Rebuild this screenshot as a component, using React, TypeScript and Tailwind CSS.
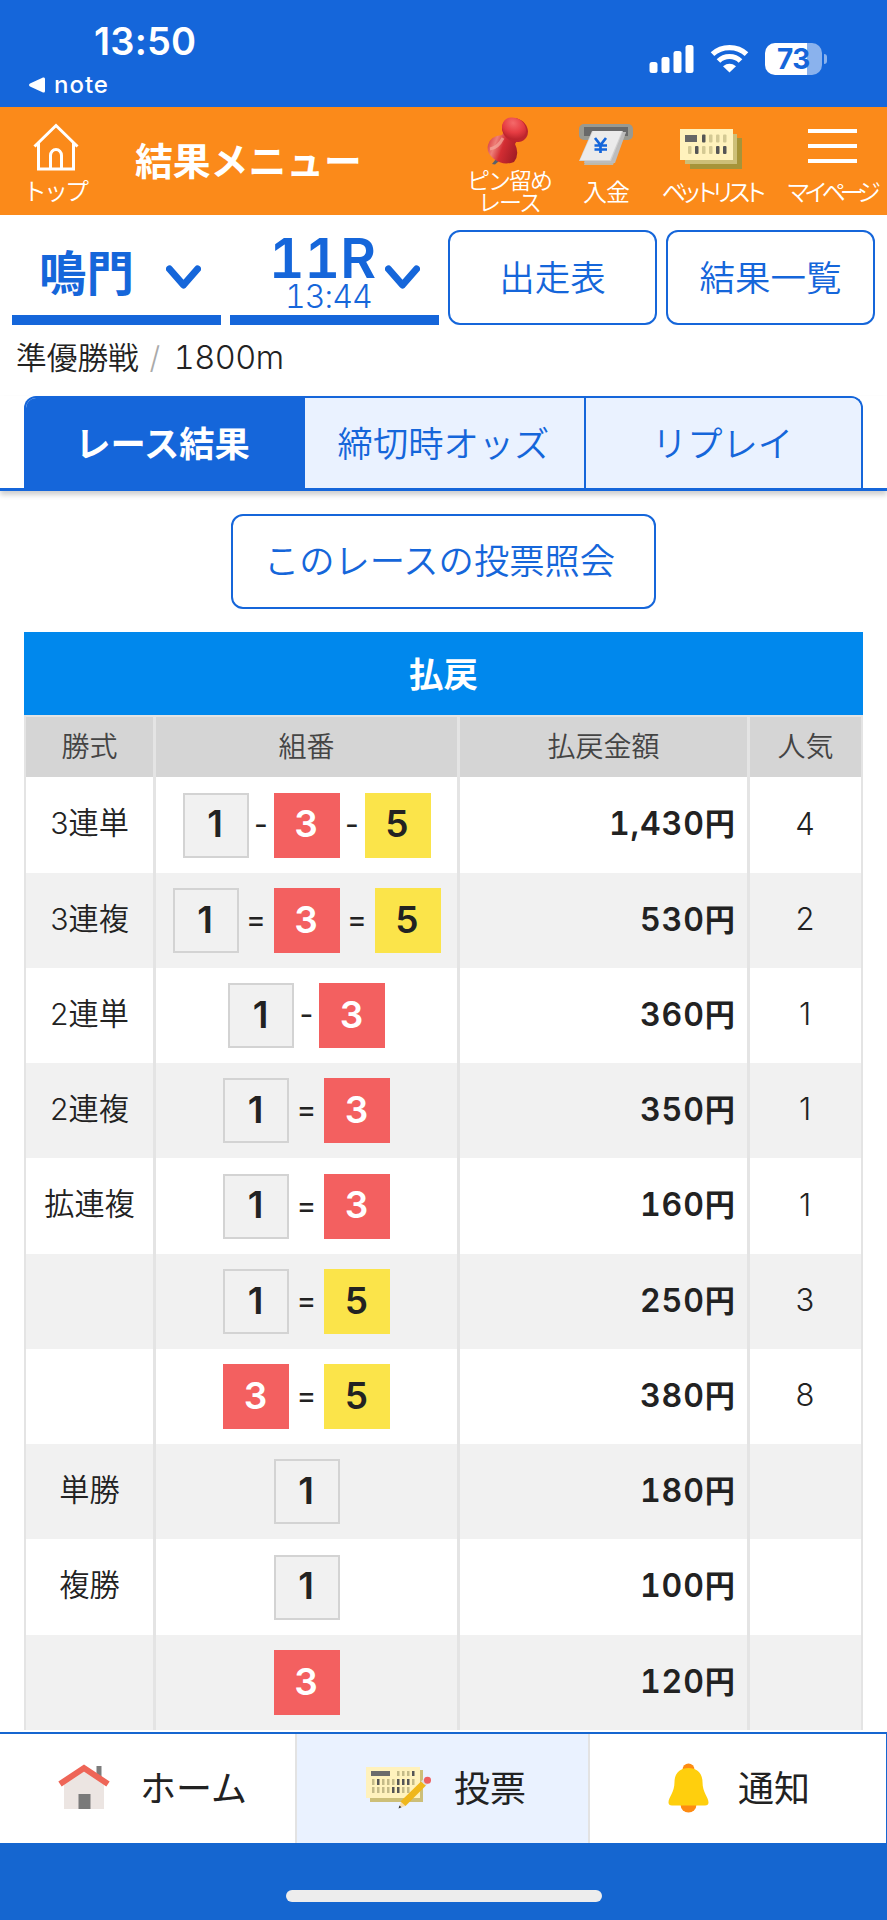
import React from "react";

const BLUE = "text-[#1566da]";

interface TileProps {
  n: number;
}

const tileColors: Record<number, string> = {
  1: "bg-[#f1f1f1] border-2 border-[#d3d3d3] text-[#222]",
  3: "bg-[#f36060] text-white",
  5: "bg-[#fbe44a] text-[#222]",
};

const Tile: React.FC<TileProps> = ({ n }) => (
  <span
    className={`flex h-[65px] w-[66px] items-center justify-center pr-px pb-[3px] text-[37px] leading-none font-semibold ${tileColors[n]}`}
  >
    {n}
  </span>
);

interface Row {
  type: string;
  nums: number[];
  sep: "-" | "=";
  amount: string;
  rank: string;
}

const rows: Row[] = [
  { type: "3連単", nums: [1, 3, 5], sep: "-", amount: "1,430", rank: "4" },
  { type: "3連複", nums: [1, 3, 5], sep: "=", amount: "530", rank: "2" },
  { type: "2連単", nums: [1, 3], sep: "-", amount: "360", rank: "1" },
  { type: "2連複", nums: [1, 3], sep: "=", amount: "350", rank: "1" },
  { type: "拡連複", nums: [1, 3], sep: "=", amount: "160", rank: "1" },
  { type: "", nums: [1, 5], sep: "=", amount: "250", rank: "3" },
  { type: "", nums: [3, 5], sep: "=", amount: "380", rank: "8" },
  { type: "単勝", nums: [1], sep: "-", amount: "180", rank: "" },
  { type: "複勝", nums: [1], sep: "-", amount: "100", rank: "" },
  { type: "", nums: [3], sep: "-", amount: "120", rank: "" },
];

const StatusBar = () => (
  <div className="flex h-[107px] justify-between bg-[#1566da] text-white">
    <div className="pl-[28px]">
      <div className="mt-[18px] pl-[66px] text-[38px] leading-[46px] font-semibold tracking-[0.2px]">
        13:50
      </div>
      <div className="mt-[8px] flex items-center">
        <svg width="18" height="16" viewBox="0 0 18 16" fill="currentColor">
          <path d="M2 6.6 15 .6q2-.8 2 1.4v12q0 2.200-2 1.400L2 9.400Q0 8 2 6.600Z" />
        </svg>
        <span className="ml-[8px] text-[24px] leading-[26px] font-medium tracking-[1px]">note</span>
      </div>
    </div>
    <div className="mt-[42px] mr-[60px] flex h-[33px] items-center">
      <svg width="45" height="29" viewBox="0 0 45 29" fill="currentColor">
        <rect x="0.500" y="18" width="8" height="11" rx="2.500" />
        <rect x="12.500" y="13" width="8" height="16" rx="2.500" />
        <rect x="24.500" y="7" width="8" height="22" rx="2.500" />
        <rect x="36.500" y="1" width="8" height="28" rx="2.500" />
      </svg>
      <svg
        className="ml-[16px]"
        width="39"
        height="29"
        viewBox="0 0 39 29"
        fill="none"
        stroke="currentColor"
        strokeWidth="5.200"
      >
        <path d="M2.500 10.200Q9.500 3.600 19.500 3.600T36.500 10.200" />
        <path d="M8.500 17Q13 12.500 19.500 12.500T30.500 17" />
        <path d="M13 22.200Q19.500 17.500 26 22.200L19.500 28.600Z" fill="currentColor" stroke="none" />
      </svg>
      <div className="ml-[16px] flex h-[32px] w-[57px] items-center justify-center rounded-[10px] bg-[linear-gradient(90deg,#fff_74%,#8ab2ed_74%)] pt-[1px] text-[28px] leading-none font-bold tracking-[-0.5px] text-[#1566da]">
        73
      </div>
      <div className="ml-[2px] h-[10px] w-[3px] rounded-r-full bg-[#8ab2ed]" />
    </div>
  </div>
);

const TopIcon = () => (
  <svg width="46" height="48" viewBox="0 0 46 48" fill="none" stroke="#fff" strokeWidth="3">
    <path d="M1.500 23.500 23 2.500 44.500 23.500" />
    <path d="M5.500 20V46H40.500V20" />
    <path d="M17.500 46V32.500a5.500 6 0 0 1 11 0V46" />
  </svg>
);

const PinIcon = () => (
  <svg width="42" height="48" viewBox="0 0 42 48">
    <defs>
      <radialGradient id="pin-head" cx="0.350" cy="0.300" r="0.800">
        <stop offset="0" stopColor="#f46a6a" />
        <stop offset="0.550" stopColor="#e63c42" />
        <stop offset="1" stopColor="#b31f27" />
      </radialGradient>
      <linearGradient id="pin-base" x1="0" y1="0.300" x2="1" y2="0.700">
        <stop offset="0" stopColor="#d83b40" />
        <stop offset="0.250" stopColor="#ee8078" />
        <stop offset="0.500" stopColor="#d32d33" />
        <stop offset="1" stopColor="#a01c24" />
      </linearGradient>
    </defs>
    <path d="M9 42 5 47 8 47.500 12 44Z" fill="#59616b" />
    <path d="M1 28Q3 19 15 18L18 13 31 22 28 27Q33 37 27 45 16 49 7 42-1 36 1 28Z" fill="url(#pin-base)" />
    <ellipse cx="28" cy="13" rx="13.500" ry="11.500" transform="rotate(32 28 13)" fill="#be252d" />
    <ellipse cx="27" cy="11.500" rx="12.500" ry="10.500" transform="rotate(32 27 11.500)" fill="url(#pin-head)" />
    <path d="M3 32Q11 31 16 21" stroke="#f4a79b" strokeWidth="3" fill="none" opacity=".75" />
  </svg>
);

const DepositIcon = () => (
  <svg width="54" height="42" viewBox="0 0 54 42">
    <rect x="0" y="0" width="54" height="16" rx="5" fill="#999991" />
    <rect x="5" y="3" width="44" height="9" fill="#696969" />
    <path d="M15 8H47L34 41H5Z" fill="#bfb9a9" />
    <path d="M13 8H47L36 39H5Z" fill="#bcbcbc" />
    <path d="M13 7H44L32 37H0Z" fill="#d2d2d2" />
    <path d="M14 7H43L31 36H1Z" fill="#ebebeb" />
    <path d="M16 14 21.500 21 27 14M21.500 21V29M15.500 21.500H28M15.500 25.500H28" fill="none" stroke="#1566da" strokeWidth="2.700" />
  </svg>
);

const BetListIcon = () => (
  <svg width="62" height="40" viewBox="0 0 62 40">
    <path d="M10 9H62V40H10Z" fill="#a69439" />
    <path d="M5 5H57V35H5Z" fill="#cdbf78" />
    <path d="M0 0H53V31H0Z" fill="#fff2bd" />
    <rect x="5" y="6" width="12" height="7" fill="#666" />
    {[22, 29, 36, 43].map((x, i) => (
      <rect key={x} x={x} y="5.500" width="3.500" height="8" rx="1" fill={i === 0 ? "#555" : "#d4c994"} />
    ))}
    {[8, 15, 22, 29, 36, 43].map((x, i) => (
      <rect key={x} x={x} y="17" width="3.500" height="8" rx="1" fill={i === 1 || i > 3 ? "#555" : "#d4c994"} />
    ))}
  </svg>
);

const Header = () => (
  <header className="flex h-[108px] bg-[#fb8a1a] font-[350] text-white">
    <div className="flex w-[112px] flex-col items-center pt-[16px] text-[24px] leading-[28px]">
      <TopIcon />
      <span className="mt-[7px] mr-[3px] tracking-[-2.800px]">トップ</span>
    </div>
    <h1 className="ml-[23px] w-[327px] pt-[28px] text-[37.800px] leading-[52px] font-bold">結果メニュー</h1>
    <div className="flex w-[92px] flex-col items-center pt-[10px] text-[23px] leading-[22px] whitespace-nowrap">
      <PinIcon />
      <span className="mt-[5px] ml-[2px] text-center tracking-[-2px]">
        ピン留め
        <br />
        レース
      </span>
    </div>
    <div className="flex w-[101px] flex-col items-center pt-[17px] pl-[2px] text-[24px] leading-[28px]">
      <DepositIcon />
      <span className="mt-[13px] ml-px tracking-[-1px]">入金</span>
    </div>
    <div className="flex w-[119px] flex-col items-center pt-[22px] text-[24px] leading-[28px]">
      <div className="mr-[7px]">
        <BetListIcon />
      </div>
      <span className="mt-[10px] mr-[7px] tracking-[-7.600px] whitespace-nowrap">ベットリスト</span>
    </div>
    <div className="flex w-[113px] flex-col items-center pt-[22px] text-[24px] leading-[28px]">
      <div className="ml-[3px] flex flex-col gap-[11px]">
        <i className="h-[4px] w-[49px] bg-white" />
        <i className="h-[4px] w-[49px] bg-white" />
        <i className="h-[4px] w-[49px] bg-white" />
      </div>
      <span className="mt-[16px] tracking-[-6.200px] whitespace-nowrap">マイページ</span>
    </div>
  </header>
);

const Chevron = () => (
  <svg width="35" height="25" viewBox="0 0 35 25" fill="none" stroke="#1566da" strokeWidth="7" strokeLinecap="round" strokeLinejoin="round">
    <path d="M3.500 4 17.500 20 31.500 4" />
  </svg>
);

const RaceSelect = () => (
  <div className={`flex gap-[9px] pt-[15px] pl-[12px] ${BLUE}`}>
    <div className="flex h-[95px] w-[209px] border-b-[10px] border-[#1566da] pl-[27px]">
      <span className="pt-[12px] text-[47.500px] leading-[64px] font-bold">鳴門</span>
      <span className="mt-[35px] ml-[32px]">
        <Chevron />
      </span>
    </div>
    <div className="flex h-[95px] w-[209px] border-b-[10px] border-[#1566da] pl-[39px]">
      <div className="w-[113px] tabular-nums">
        <div className="pt-[3px] text-[55px] leading-[50px] font-semibold">11R</div>
        <div className="pl-[16px] text-[32px] leading-[27px] font-light tracking-[-0.9px]">13:44</div>
      </div>
      <span className="mt-[35px] ml-[3px]">
        <Chevron />
      </span>
    </div>
    <button className="h-[95px] w-[209px] rounded-[12px] border-2 border-[#1566da] pt-[2px] text-[35.500px] font-[350]">
      出走表
    </button>
    <button className="h-[95px] w-[209px] rounded-[12px] border-2 border-[#1566da] pt-[2px] text-[35.500px] font-[350]">
      結果一覧
    </button>
  </div>
);

const Tabs = () => (
  <div className="border-b-[3px] border-[#1566da] px-[24px] shadow-[0_4px_5px_#00000030]">
    <div className={`flex h-[92px] overflow-hidden rounded-t-[12px] border-2 border-b-0 border-[#1566da] text-[35.300px] leading-[94px] font-[350] ${BLUE}`}>
      <div className="w-[279px] bg-[#1566da] pr-[6px] text-center font-bold text-white">レース結果</div>
      <div className="w-[281px] border-r-2 border-[#1566da] bg-[#eaf2ff] pr-[2px] text-center">締切時オッズ</div>
      <div className="flex-1 bg-[#eaf2ff] pr-[2px] text-center">リプレイ</div>
    </div>
  </div>
);

const PayoutTable = () => (
  <table className="mt-[23px] ml-[24px] w-[839px] table-fixed border-separate border-spacing-0 text-[#222]">
    <colgroup>
      <col className="w-[132px]" />
      <col className="w-[304px]" />
      <col className="w-[290px]" />
      <col className="w-[113px]" />
    </colgroup>
    <thead>
      <tr className="h-[83px] bg-[#0088ed] text-[34.500px] text-white">
        <th colSpan={4} className="p-0 pt-[3px] font-bold">
          払戻
        </th>
      </tr>
      <tr className="h-[62px] text-[28px] text-[#444]">
        {["勝式", "組番", "払戻金額", "人気"].map((h) => (
          <th
            key={h}
            className="border-t-2 border-r-[3px] border-[#e4e4e4] bg-[#d5d5d5] p-0 font-[350] first:border-l-2 last:border-r-2"
          >
            {h}
          </th>
        ))}
      </tr>
    </thead>
    <tbody>
      {rows.map((row, i) => (
        <tr
          key={i}
          className={`text-[30.200px] font-[350] odd:bg-white even:bg-[#f1f1f1] ${i % 4 === 0 ? "h-[96px]" : "h-[95px]"}`}
        >
          <td className="border-r-[3px] border-l-2 border-[#e4e4e4] p-0 pb-[2px] text-center">{row.type}</td>
          <td className="border-r-[3px] border-[#e4e4e4] p-0">
            <div className="flex justify-center">
              {row.nums.map((n, j) => (
                <React.Fragment key={j}>
                  {j > 0 && (
                    <span
                      className={`text-center text-[30px] leading-[62px] font-normal ${
                        row.sep === "-" ? "w-[25px]" : "w-[35px]"
                      }`}
                    >
                      {row.sep}
                    </span>
                  )}
                  <Tile n={n} />
                </React.Fragment>
              ))}
            </div>
          </td>
          <td className="border-r-[3px] border-[#e4e4e4] p-0 pr-[12px] pb-[2px] text-right font-bold">
            <span className="text-[32px] font-semibold tracking-[0.900px] tabular-nums">{row.amount}</span>円
          </td>
          <td className="border-r-2 border-[#e4e4e4] p-0 pr-px pb-[2px] text-center text-[31px] font-light">
            {row.rank}
          </td>
        </tr>
      ))}
    </tbody>
  </table>
);

const HomeIcon = () => (
  <svg width="52" height="46" viewBox="0 0 52 46">
    <rect x="38.500" y="2" width="5" height="14" fill="#7c7c7c" />
    <path d="M6 20 25.500 6 46 20V45H6Z" fill="#ece5e2" />
    <rect x="20.500" y="30" width="12" height="15" fill="#7a7a7a" />
    <path d="M2 20 26 4 50 20" fill="none" stroke="#ee6557" strokeWidth="6" />
  </svg>
);

const VoteIcon = () => (
  <svg width="66" height="42" viewBox="0 0 66 42">
    <path d="M4 3H57V35H4Z" fill="#cdbf78" />
    <path d="M0 0H54V31H0Z" fill="#fff2bd" />
    <rect x="5" y="4" width="19" height="5" fill="#6b6b6b" />
    {[31, 36, 41, 46].map((x, i) => (
      <rect key={x} x={x} y="4" width="2.500" height="5" fill={i === 3 ? "#555" : "#c4ba88"} />
    ))}
    {[6, 11, 16, 21, 26, 31, 36, 41, 46].map((x, i) => (
      <rect key={x} x={x} y="12" width="2.500" height="6" fill={[1, 5, 6, 7].includes(i) ? "#555" : "#c4ba88"} />
    ))}
    {[6, 11, 16, 21, 26, 31, 36, 41].map((x, i) => (
      <rect key={x} x={x} y="20" width="2.500" height="6" fill={i === 4 || i === 5 ? "#555" : "#c4ba88"} />
    ))}
    <path d="M33 41 35 34.500 39.500 39Z" fill="#f7dcab" />
    <path d="M32.500 41.500 33.500 38.500 35.500 40.300Z" fill="#333" />
    <path d="M34.500 34.500 55 14.500 60 18.500 39.500 39Z" fill="#efb71c" />
    <path d="M55 14.500 57.500 12 62.500 16 60 18.500Z" fill="#ddd" />
    <circle cx="61.500" cy="13.200" r="3.500" fill="#ee6060" />
  </svg>
);

const BellIcon = () => (
  <svg width="41" height="50" viewBox="0 0 41 50">
    <circle cx="20.500" cy="6.500" r="6" fill="#fd8b12" />
    <circle cx="20.500" cy="41.500" r="8" fill="#fd8b12" />
    <path d="M6.500 19C6.500 10 12.500 5 20.500 5S34.500 10 34.500 19C34.500 30 40.500 34 40.500 39.500Q40.500 42.500 37 42.500H4Q.5 42.500 .5 39.500C.5 34 6.500 30 6.500 19Z" fill="#ffcf0d" />
  </svg>
);

const BottomNav = () => (
  <nav className="flex h-[111px] border-t-2 border-r border-[#1566d0] bg-white text-[36px] leading-[40px] text-[#222]">
    <div className="flex w-[297px] items-center border-r-2 border-[#e3e3e3] pl-[58px]">
      <span className="mb-[4px]">
        <HomeIcon />
      </span>
      <span className="ml-[30px]">ホーム</span>
    </div>
    <div className="flex w-[293px] items-center border-r-2 border-[#e3e3e3] bg-[#eaf2ff] pl-[69px]">
      <span className="mb-[2px]">
        <VoteIcon />
      </span>
      <span className="ml-[22px]">投票</span>
    </div>
    <div className="flex flex-1 items-center pl-[78px]">
      <span className="mb-[2px]">
        <BellIcon />
      </span>
      <span className="ml-[29px]">通知</span>
    </div>
  </nav>
);

const App = () => (
  <div className="flex h-[1920px] w-[887px] flex-col overflow-hidden bg-white font-['Inter','Noto_Sans_CJK_JP',sans-serif]">
    <StatusBar />
    <Header />
    <main className="h-[1517px] shrink-0 overflow-hidden">
      <RaceSelect />
      <div className="mt-[16px] mb-[22px] flex h-[33px] items-center pl-[16px] text-[30.700px] leading-[33px] font-[350] whitespace-pre text-[#222]">
        準優勝戦<span className="ml-[2px] mr-[5px] text-[#aaa]"> / </span>
        <span className="text-[32.500px] font-light tracking-[-0.500px] tabular-nums">1800m</span>
      </div>
      <Tabs />
      <button className={`mx-auto mt-[23px] block h-[95px] w-[425px] rounded-[12px] border-2 border-[#1566da] pt-[2px] pr-[8px] text-[35.300px] font-[350] ${BLUE}`}>
        このレースの投票照会
      </button>
      <PayoutTable />
    </main>
    <BottomNav />
    <div className="flex flex-1 items-start justify-center bg-[#1566d0] pt-[47px]">
      <div className="h-[12px] w-[316px] rounded-full bg-[#ededed]" />
    </div>
  </div>
);

export default App;
